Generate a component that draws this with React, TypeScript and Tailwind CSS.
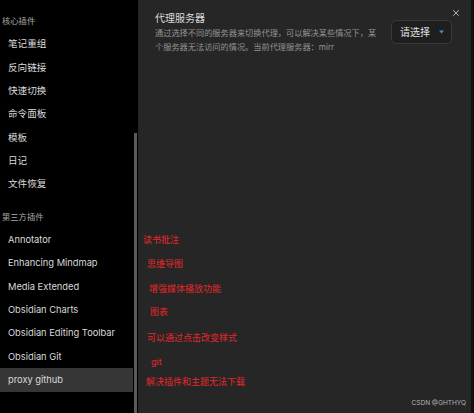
import { X } from 'lucide-react';

const corePlugins = ['笔记重组', '反向链接', '快速切换', '命令面板', '模板', '日记', '文件恢复'];
const thirdParty = [
  'Annotator',
  'Enhancing Mindmap',
  'Media Extended',
  'Obsidian Charts',
  'Obsidian Editing Toolbar',
  'Obsidian Git',
  'proxy github',
];

// red annotations written over the screenshot
const notes = [
  { text: '读书批注', cls: 'mt-[179px] ml-[5px]' },
  { text: '思维导图', cls: 'mt-[10px] ml-[9px]' },
  { text: '增强媒体播放功能', cls: 'mt-[11px] ml-[11px]' },
  { text: '图表', cls: 'mt-[9px] ml-[12px]' },
  { text: '可以通过点击改变样式', cls: 'mt-[12px] ml-[9px]' },
  { text: 'git', cls: 'mt-[10px] ml-[13px]' },
  { text: '解决插件和主题无法下载', cls: 'mt-[6px] ml-[8px]' },
];

export default function App() {
  return (
    <div
      className="w-[474px] h-[413px] flex bg-black overflow-hidden"
      style={{ fontFamily: 'Inter, "Noto Sans CJK SC", sans-serif' }}
    >
      {/* Sidebar */}
      <aside className="w-[138px] h-full flex bg-black">
        <div className="w-[133px] pt-[10px] flex flex-col">
          <div className="h-[23px] flex items-center pl-[2px] text-[8.3px] text-[#a8a8a8]">核心插件</div>
          {corePlugins.map((p) => (
            <div key={p} className="h-[23.33px] flex items-center pl-[8px] text-[9.6px] text-[#dadada]">
              {p}
            </div>
          ))}
          <div className="h-[23px] mt-[9px] flex items-center pl-[2px] text-[8.3px] text-[#a8a8a8]">第三方插件</div>
          {thirdParty.map((p) => (
            <div
              key={p}
              className={`h-[23.33px] flex items-center pl-[8px] text-[9.3px] text-[#dadada] ${
                p === 'proxy github' ? 'bg-[#363636]' : ''
              }`}
            >
              {p}
            </div>
          ))}
        </div>
        <div className="w-[5px] h-full flex flex-col pl-[1px]">
          <div className="h-[133px]" />
          <div className="flex-1 w-[3px] bg-[#5a5a5a]" />
        </div>
      </aside>

      {/* Main panel */}
      <main className="relative flex-1 h-full bg-[#262626] flex flex-col">
        <div className="flex items-start pt-[10px] pl-[17px]">
          <div className="w-[229px]">
            <div className="h-[16px] flex items-center text-[10px] text-[#dcdcdc]">代理服务器</div>
            <div className="w-[224px] text-[8.2px] leading-[14px] text-[#939393]">
              通过选择不同的服务器来切换代理，可以解决某些情况下，某个服务器无法访问的情况。当前代理服务器：mirr
            </div>
          </div>
          <button className="ml-[7px] mt-[10px] w-[61px] h-[24px] rounded-[5px] bg-[#1e1e1e] border border-[#3a3a3a] flex items-center pl-[8px] pr-[6px] text-[10px] text-[#e0e0e0]">
            <span>请选择</span>
            <svg width="7" height="6" viewBox="0 0 7 6" className="ml-auto">
              <path d="M1 1.5 L3.5 4.5 L6 1.5 Z" fill="#3b8fe6" />
            </svg>
          </button>
        </div>
        <X size={10} strokeWidth={2.2} className="absolute top-[8px] right-[10px] text-[#c0c0c0]" />

        <div className="flex flex-col">
          {notes.map((n) => (
            <div key={n.text} className={`h-[14px] flex items-center text-[9px] text-[#e8262a] ${n.cls}`}>
              {n.text}
            </div>
          ))}
        </div>

        <div className="absolute bottom-[4px] right-[5px] text-[6.5px] text-[#b4b4b4]">CSDN @GHTHYQ</div>
      </main>

      {/* right edge strip */}
      <div className="w-[3px] h-full bg-[#111]" />
    </div>
  );
}
